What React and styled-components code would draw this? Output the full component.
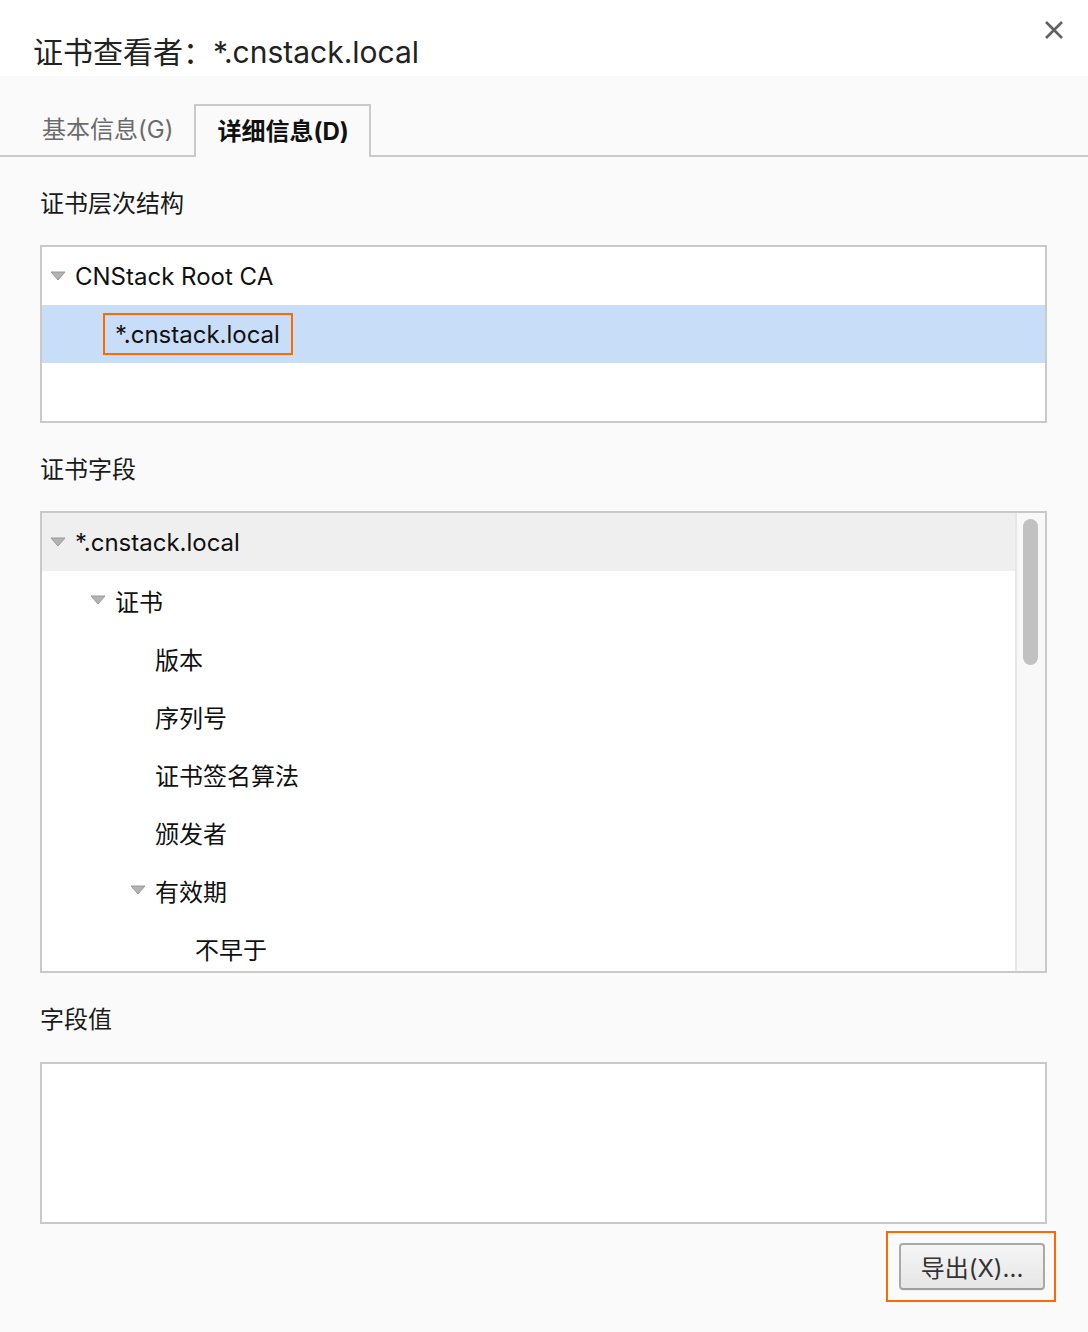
import React from "react";
import styled, { createGlobalStyle } from "styled-components";

const FONT = `"Inter", "Noto Sans CJK SC", "Noto Sans", sans-serif`;

const Global = createGlobalStyle`
  html, body { margin: 0; padding: 0; background: #fafafa; }
  body { font-family: ${FONT}; color: #1a1a1a; }
  * { box-sizing: border-box; }
`;

const Dialog = styled.div`
  width: 1088px;
  height: 1332px;
  background: #fafafa;
  display: flex;
  flex-direction: column;
`;

const Header = styled.div`
  height: 76px;
  background: #ffffff;
  position: relative;
  padding: 32px 0 0 33px;
`;

const Title = styled.h1`
  margin: 0;
  font-size: 30px;
  font-weight: 400;
  line-height: 40px;
  color: #222;
`;

const Close = styled.button`
  position: absolute;
  right: 20px;
  top: 16px;
  width: 28px;
  height: 28px;
  border: 0;
  padding: 0;
  background: transparent;
  display: flex;
  align-items: center;
  justify-content: center;
`;

const TabBar = styled.div`
  display: flex;
  align-items: flex-end;
  height: 81px;
  border-bottom: 2px solid #c9c9c9;
`;

const Tab = styled.div`
  height: 53px;
  padding: 0 ${(p) => (p.$active ? "20px" : "19px")} 4px ${(p) => (p.$active ? "21px" : "40px")};
  display: flex;
  align-items: center;
  font-size: 24px;
  font-weight: ${(p) => (p.$active ? 700 : 400)};
  color: ${(p) => (p.$active ? "#111" : "#6b6b6b")};
  border: ${(p) => (p.$active ? "2px solid #c9c9c9" : "2px solid transparent")};
  border-bottom: none;
  background: #fafafa;
  margin-bottom: ${(p) => (p.$active ? "-2px" : "0")};
`;

const Content = styled.div`
  padding: 0 41px 0 40px;
  display: flex;
  flex-direction: column;
`;

const SectionLabel = styled.div`
  font-size: 24px;
  line-height: 30px;
  color: #1a1a1a;
  margin-top: ${(p) => p.$mt}px;
  margin-bottom: ${(p) => p.$mb}px;
`;

const Box = styled.div`
  border: 2px solid #c9c9c9;
  background: #ffffff;
  height: ${(p) => p.$h}px;
  display: flex;
  overflow: hidden;
`;

const Rows = styled.div`
  flex: 1;
  display: flex;
  flex-direction: column;
`;

const Row = styled.div`
  height: 58px;
  flex: none;
  display: flex;
  align-items: center;
  padding-left: ${(p) => 7 + p.$level * 40}px;
  background: ${(p) => (p.$selected ? "#c8ddf8" : p.$focus ? "#efefef" : "transparent")};
  font-size: 24px;
  color: #111;
`;

const Toggle = styled.span`
  width: 17px;
  height: 58px;
  margin-right: 9px;
  display: flex;
  align-items: center;
  justify-content: center;
  flex: none;
`;

const Highlight = styled.span`
  border: 2px solid #ff6a00;
  padding: 0 11px 0 10px;
  height: 42px;
  display: flex;
  align-items: center;
  margin-left: -12px;
`;

const ScrollTrack = styled.div`
  width: 30px;
  flex: none;
  background: #f8f8f8;
  border-left: 2px solid #e6e6e6;
  padding: 6px 0 0 6px;
`;

const Thumb = styled.div`
  width: 15px;
  height: 146px;
  border-radius: 8px;
  background: #c1c1c1;
`;

const Footer = styled.div`
  display: flex;
  justify-content: flex-end;
  padding: 7px 32px 0 0;
`;

const ButtonFrame = styled.div`
  border: 2px solid #ff6a00;
  padding: 10px 9px 10px 11px;
`;

const Button = styled.button`
  width: 146px;
  height: 47px;
  border: 2px solid #a9a9a9;
  border-bottom-color: #9f9f9f;
  border-radius: 4px;
  background: linear-gradient(#f5f5f5, #e6e6e6);
  font-family: ${FONT};
  font-size: 24px;
  color: #333;
  padding: 0;
  box-shadow: 0 1px 0 rgba(0,0,0,0.05);
`;

const Caret = () => (
  <svg width="16" height="10" viewBox="0 0 16 10">
    <path d="M1 1 L15 1 L8 9 Z" fill="#b3b3b3" stroke="#9a9a9a" strokeWidth="1" strokeLinejoin="round" />
  </svg>
);

const TreeRow = ({ level, toggle, selected, focus, children }) => (
  <Row $level={level} $selected={selected} $focus={focus}>
    <Toggle>{toggle ? <Caret /> : null}</Toggle>
    {children}
  </Row>
);

export default function App() {
  return (
    <>
      <Global />
      <Dialog>
        <Header>
          <Title>证书查看者：*.cnstack.local</Title>
          <Close aria-label="关闭">
            <svg width="22" height="22" viewBox="0 0 22 22">
              <path d="M3 3 L19 19 M19 3 L3 19" stroke="#5f6166" strokeWidth="2.6" strokeLinecap="butt" />
            </svg>
          </Close>
        </Header>
        <TabBar>
          <Tab>基本信息(G)</Tab>
          <Tab $active>详细信息(D)</Tab>
        </TabBar>
        <Content>
          <SectionLabel $mt={32} $mb={26}>证书层次结构</SectionLabel>
          <Box $h={178}>
            <Rows>
              <TreeRow level={0} toggle>CNStack Root CA</TreeRow>
              <Row $level={1} $selected>
                <Toggle />
                <Highlight>*.cnstack.local</Highlight>
              </Row>
            </Rows>
          </Box>
          <SectionLabel $mt={32} $mb={26}>证书字段</SectionLabel>
          <Box $h={462}>
            <Rows>
              <TreeRow level={0} toggle focus>*.cnstack.local</TreeRow>
              <TreeRow level={1} toggle>证书</TreeRow>
              <TreeRow level={2}>版本</TreeRow>
              <TreeRow level={2}>序列号</TreeRow>
              <TreeRow level={2}>证书签名算法</TreeRow>
              <TreeRow level={2}>颁发者</TreeRow>
              <TreeRow level={2} toggle>有效期</TreeRow>
              <TreeRow level={3}>不早于</TreeRow>
            </Rows>
            <ScrollTrack>
              <Thumb />
            </ScrollTrack>
          </Box>
          <SectionLabel $mt={32} $mb={27}>字段值</SectionLabel>
          <Box $h={162} />
        </Content>
        <Footer>
          <ButtonFrame>
            <Button>导出(X)...</Button>
          </ButtonFrame>
        </Footer>
      </Dialog>
    </>
  );
}
